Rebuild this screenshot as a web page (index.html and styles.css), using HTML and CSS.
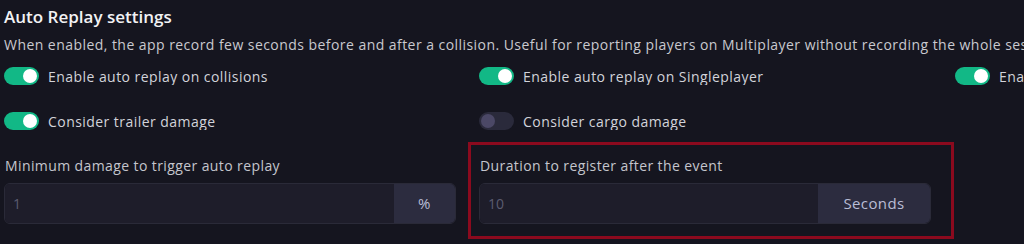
FILE: index.html
```html
<!DOCTYPE html>
<html>
<head>
<meta charset="utf-8">
<link rel="stylesheet" href="styles.css">
</head>
<body>
<div class="page">
  <h2 class="title">Auto Replay settings</h2>
  <p class="desc">When enabled, the app record few seconds before and after a collision. Useful for reporting players on Multiplayer without recording the whole session.</p>
  <div class="toggles">
    <label class="opt"><span class="sw on"><span class="knob"></span></span><span class="txt">Enable auto replay on collisions</span></label>
    <label class="opt"><span class="sw on"><span class="knob"></span></span><span class="txt">Enable auto replay on Singleplayer</span></label>
    <label class="opt"><span class="sw on"><span class="knob"></span></span><span class="txt">Enable auto replay on Multiplayer</span></label>
    <label class="opt"><span class="sw on"><span class="knob"></span></span><span class="txt">Consider trailer damage</span></label>
    <label class="opt"><span class="sw off"><span class="knob"></span></span><span class="txt">Consider cargo damage</span></label>
  </div>
  <div class="fields">
    <div class="field">
      <div class="flabel">Minimum damage to trigger auto replay</div>
      <div class="group">
        <div class="input">1</div>
        <div class="addon addon-sm">%</div>
      </div>
    </div>
    <div class="field highlight">
      <div class="flabel">Duration to register after the event</div>
      <div class="group">
        <div class="input">10</div>
        <div class="addon addon-lg">Seconds</div>
      </div>
    </div>
  </div>
</div>
</body>
</html>
```

FILE: styles.css
```css
html, body {
  margin: 0;
  padding: 0;
  background: #15151f;
  overflow: hidden;
}
.page {
  width: 1024px;
  height: 244px;
  padding: 0 0 0 4px;
  box-sizing: border-box;
  font-family: "Open Sans", "Liberation Sans", sans-serif;
  color: #cfd0d8;
  overflow: hidden;
}
.title {
  margin: 0;
  padding-top: 5px;
  font-size: 17px;
  line-height: 24px;
  font-weight: 600;
  color: #f2f2f4;
}
.desc {
  margin: 0;
  padding-top: 6px;
  font-size: 14px;
  line-height: 20px;
  letter-spacing: 0.45px;
  white-space: nowrap;
  color: #c9c9cf;
}
.toggles {
  display: grid;
  grid-template-columns: 475px 476px 69px;
  row-gap: 27px;
  padding-top: 12px;
}
.opt {
  display: flex;
  align-items: center;
  gap: 9px;
  height: 18px;
  white-space: nowrap;
  font-size: 14px;
  letter-spacing: 0.45px;
  overflow: hidden;
}
.sw {
  position: relative;
  display: block;
  width: 35px;
  height: 18px;
  border-radius: 9px;
  flex: none;
}
.sw.on { background: #12b886; }
.sw.off { background: #2a2a3b; }
.knob {
  position: absolute;
  top: 2px;
  width: 14px;
  height: 14px;
  border-radius: 50%;
}
.sw.on .knob { right: 2px; background: #ffffff; }
.sw.off .knob { left: 2px; background: #4b4866; }
.txt { color: #d2d3da; }
.fields {
  display: grid;
  grid-template-columns: 475px 452px;
  padding-top: 27px;
}
.field { position: relative; width: 452px; }
.flabel {
  font-size: 14px;
  line-height: 18px;
  letter-spacing: 0.4px;
  color: #c4c5cd;
  padding-left: 1px;
}
.group {
  display: flex;
  margin-top: 8px;
  height: 41px;
  border: 1px solid #2a2a38;
  border-radius: 6px;
  box-sizing: border-box;
  overflow: hidden;
}
.input {
  flex: 1;
  background: #1e1d2a;
  color: #5c5c70;
  font-size: 14px;
  line-height: 39px;
  padding-left: 8px;
}
.addon {
  background: #2c2c3f;
  color: #b9bdd6;
  font-size: 15px;
  line-height: 39px;
  letter-spacing: 0.4px;
  text-align: center;
}
.addon-sm { width: 61px; }
.addon-lg { width: 112px; }
.highlight::after {
  content: "";
  position: absolute;
  left: -11px;
  right: -23px;
  top: -15px;
  bottom: -15px;
  border: 3px solid #8b0a1e;
  pointer-events: none;
}
```
